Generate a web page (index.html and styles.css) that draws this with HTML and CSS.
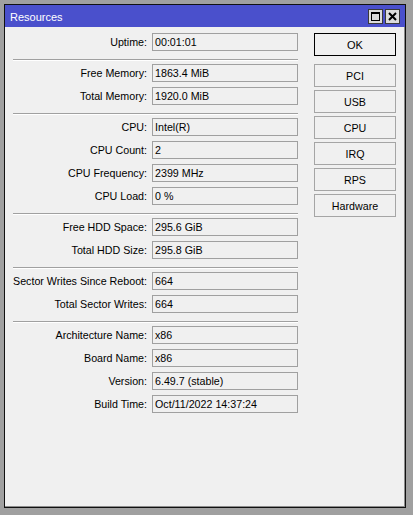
FILE: index.html
```html
<!DOCTYPE html><html lang="en">
<head>
  <meta charset="UTF-8">
  <meta name="viewport" content="width=device-width, initial-scale=1.0">
  <title>Resources</title>
  <link rel="stylesheet" href="styles.css">
</head>
<body><div class="window">
  <div class="titlebar">
    <span class="title">Resources</span>
    <div class="title-buttons">
      <div class="tbtn">
        <svg width="13" height="13" viewBox="0 0 13 13"><rect x="2.5" y="2.5" width="8" height="8" fill="none" stroke="#000"/><line x1="2" y1="3" x2="11" y2="3" stroke="#000" stroke-width="2"/></svg>
      </div>
      <div class="tbtn">
        <svg width="13" height="13" viewBox="0 0 13 13"><path d="M3 3 L10 10 M10 3 L3 10" stroke="#000" stroke-width="2" fill="none"/></svg>
      </div>
    </div>
  </div>
  <div class="panel">
    <div class="form">
      <div class="row"><span class="label">Uptime:</span><div class="field">00:01:01</div></div>
      <div class="sep"></div>
      <div class="row"><span class="label">Free Memory:</span><div class="field">1863.4 MiB</div></div>
      <div class="row"><span class="label">Total Memory:</span><div class="field">1920.0 MiB</div></div>
      <div class="sep"></div>
      <div class="row"><span class="label">CPU:</span><div class="field">Intel(R)</div></div>
      <div class="row"><span class="label">CPU Count:</span><div class="field">2</div></div>
      <div class="row"><span class="label">CPU Frequency:</span><div class="field">2399 MHz</div></div>
      <div class="row"><span class="label">CPU Load:</span><div class="field">0 %</div></div>
      <div class="sep"></div>
      <div class="row"><span class="label">Free HDD Space:</span><div class="field">295.6 GiB</div></div>
      <div class="row"><span class="label">Total HDD Size:</span><div class="field">295.8 GiB</div></div>
      <div class="sep"></div>
      <div class="row"><span class="label">Sector Writes Since Reboot:</span><div class="field">664</div></div>
      <div class="row"><span class="label">Total Sector Writes:</span><div class="field">664</div></div>
      <div class="sep"></div>
      <div class="row"><span class="label">Architecture Name:</span><div class="field">x86</div></div>
      <div class="row"><span class="label">Board Name:</span><div class="field">x86</div></div>
      <div class="row"><span class="label">Version:</span><div class="field">6.49.7 (stable)</div></div>
      <div class="row"><span class="label">Build Time:</span><div class="field">Oct/11/2022 14:37:24</div></div>
    </div>
    <div class="buttons">
      <button class="default">OK</button>
      <button>PCI</button>
      <button>USB</button>
      <button>CPU</button>
      <button>IRQ</button>
      <button>RPS</button>
      <button>Hardware</button>
    </div>
  </div>
</div></body>
</html>
```

FILE: styles.css
```css
* { box-sizing: border-box; }
body {
  margin: 0;
  background: #a0a0a0;
  font-family: 'Liberation Sans', Arial, sans-serif;
  font-size: 10.7px;
  color: #000;
}
.window {
  margin: 4px;
  width: 402px;
  height: 504px;
  background: #f0f0f0;
  border: 1px solid #111;
  box-shadow: inset -1px -1px 0 #8c8c8c;
}
.titlebar {
  display: flex;
  align-items: center;
  justify-content: space-between;
  height: 22px;
  padding: 1px 5px 0 5px;
  background: #4a50cc;
}
.title {
  color: #fff;
  font-size: 11px;
}
.title-buttons {
  display: flex;
  gap: 2px;
}
.tbtn {
  width: 15px;
  height: 15px;
  border: 1px solid #3a3a3a;
  background: #dcdcdc;
  display: flex;
  align-items: center;
  justify-content: center;
}
.tbtn svg {
  display: block;
}
.panel {
  display: flex;
  padding: 6px 8px 0 8px;
}
.form {
  display: flex;
  flex-direction: column;
  width: 285px;
}
.row {
  display: flex;
  height: 18px;
  margin-bottom: 5px;
}
.label {
  width: 134px;
  margin-right: 5px;
  text-align: right;
  line-height: 18px;
  white-space: nowrap;
}
.field {
  width: 146px;
  height: 18px;
  border: 1px solid #a0a0a0;
  padding-left: 2px;
  line-height: 16px;
  white-space: nowrap;
}
.sep {
  border-top: 1px solid #a0a0a0;
  border-bottom: 1px solid #fff;
  margin: 3px 0 3px;
}
.buttons {
  display: flex;
  flex-direction: column;
  margin-left: 16px;
  width: 82px;
}
button {
  font-family: inherit;
  font-size: 10.7px;
  color: #000;
  height: 23px;
  margin: 0 0 3px;
  padding: 0;
  background: #f0f0f0;
  border: 1px solid #a5a5a5;
}
button.default {
  border-color: #000;
  margin-bottom: 8px;
  font-size: 11px;
}
```
